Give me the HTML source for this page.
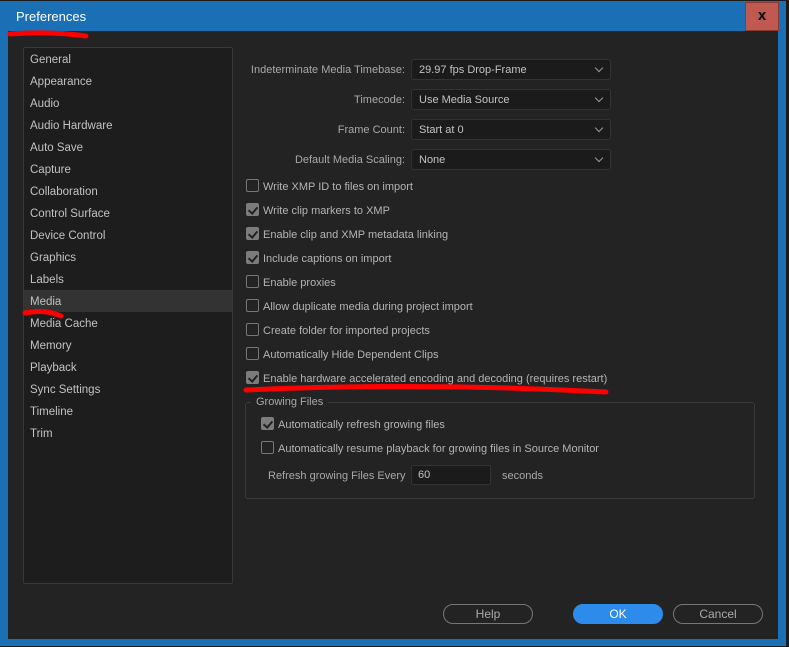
<!DOCTYPE html>
<html><head><meta charset="utf-8"><style>
*{box-sizing:border-box;margin:0;padding:0}
body{width:789px;height:647px;background:#1b1b1b;position:relative;overflow:hidden;font-family:"Liberation Sans",sans-serif;font-size:11px;color:#b4b4b4}
.frame{position:absolute;left:0;top:1px;width:786px;height:645px;background:#1a6fb5}
.content{position:absolute;left:8px;top:31px;width:770px;height:608px;background:#232323}
.title{position:absolute;left:16px;top:9px;color:#fff;font-size:13px}
.close{position:absolute;left:745px;top:2px;width:34px;height:29px;background:#c0594f;border:1px solid #8a3a34;color:#000;font-weight:bold;font-size:15px;text-align:center;line-height:26px}
.side{position:absolute;left:23px;top:47px;width:210px;height:537px;background:#1d1d1d;border:1px solid #383838;border-radius:2px}
.side div{height:22px;line-height:24px;padding-left:6px;color:#c2c2c2;font-size:11.5px}
.side .sel{background:#333}
.lbl{position:absolute;text-align:right;width:200px;color:#a8a8a8}
.dd{position:absolute;left:411px;width:200px;height:21px;background:#1b1b1b;border:1px solid #333;border-radius:3px;color:#c2c2c2;padding-left:7px;line-height:20px}
.dd:after{content:"";position:absolute;right:8px;top:5px;width:5px;height:5px;border-right:1.3px solid #999;border-bottom:1.3px solid #999;transform:rotate(45deg)}
.cb{position:absolute;height:16px;line-height:18px;padding-left:17px;white-space:nowrap}
.cb:before{content:"";position:absolute;left:0;top:1px;width:13px;height:13px;border:1.5px solid #777;border-radius:2px;box-sizing:border-box}
.cb.on:before{background:#7c7c7c;border-color:#7c7c7c}
.cb.on:after{content:"";position:absolute;left:4px;top:3px;width:4px;height:7px;border-right:2px solid #222;border-bottom:2px solid #222;transform:rotate(40deg)}
.group{position:absolute;left:245px;top:402px;width:510px;height:97px;border:1px solid #3a3a3a;border-radius:3px}
.btn{position:absolute;top:604px;width:90px;height:20px;border:1.5px solid #777;border-radius:10px;text-align:center;line-height:19px;color:#aaa;font-size:12px}
</style></head><body>
<div class="frame"></div>
<div class="content"></div>
<div class="title">Preferences</div>
<div class="close">x</div>
<div class="side">
<div>General</div><div>Appearance</div><div>Audio</div><div>Audio Hardware</div><div>Auto Save</div><div>Capture</div><div>Collaboration</div><div>Control Surface</div><div>Device Control</div><div>Graphics</div><div>Labels</div><div class="sel">Media</div><div>Media Cache</div><div>Memory</div><div>Playback</div><div>Sync Settings</div><div>Timeline</div><div>Trim</div>
</div>
<div class="lbl" style="left:205px;top:64px">Indeterminate Media Timebase:</div>
<div class="dd" style="top:59px">29.97 fps Drop-Frame</div>
<div class="lbl" style="left:205px;top:94px">Timecode:</div>
<div class="dd" style="top:89px">Use Media Source</div>
<div class="lbl" style="left:205px;top:124px">Frame Count:</div>
<div class="dd" style="top:119px">Start at 0</div>
<div class="lbl" style="left:205px;top:154px">Default Media Scaling:</div>
<div class="dd" style="top:149px">None</div>
<div class="cb" style="left:246px;top:178px">Write XMP ID to files on import</div>
<div class="cb on" style="left:246px;top:202px">Write clip markers to XMP</div>
<div class="cb on" style="left:246px;top:226px">Enable clip and XMP metadata linking</div>
<div class="cb on" style="left:246px;top:250px">Include captions on import</div>
<div class="cb" style="left:246px;top:274px">Enable proxies</div>
<div class="cb" style="left:246px;top:298px">Allow duplicate media during project import</div>
<div class="cb" style="left:246px;top:322px">Create folder for imported projects</div>
<div class="cb" style="left:246px;top:346px">Automatically Hide Dependent Clips</div>
<div class="cb on" style="left:246px;top:370px">Enable hardware accelerated encoding and decoding (requires restart)</div>
<div class="group"></div>
<div style="position:absolute;left:251px;top:396px;background:#232323;padding:0 5px;color:#a8a8a8">Growing Files</div>
<div class="cb on" style="left:261px;top:416px">Automatically refresh growing files</div>
<div class="cb" style="left:261px;top:440px">Automatically resume playback for growing files in Source Monitor</div>
<div style="position:absolute;left:268px;top:470px;color:#a8a8a8">Refresh growing Files Every</div>
<div style="position:absolute;left:411px;top:465px;width:80px;height:20px;background:#1b1b1b;border:1px solid #333;border-radius:2px;padding-left:6px;line-height:19px;color:#c2c2c2">60</div>
<div style="position:absolute;left:502px;top:470px;color:#a8a8a8">seconds</div>
<div class="btn" style="left:443px">Help</div>
<div class="btn" style="left:573px;background:#2d8ceb;border-color:#2d8ceb;color:#fff">OK</div>
<div class="btn" style="left:673px">Cancel</div>
<svg style="position:absolute;left:0;top:0" width="789" height="647">
<path d="M10 34 Q50 31 86 36" stroke="#f00" stroke-width="5" fill="none" stroke-linecap="round"/>
<path d="M25 313 Q45 309 61 316" stroke="#f00" stroke-width="5" fill="none" stroke-linecap="round"/>
<path d="M246 390 Q420 382 606 392" stroke="#f00" stroke-width="5" fill="none" stroke-linecap="round"/>
</svg>
</body></html>
